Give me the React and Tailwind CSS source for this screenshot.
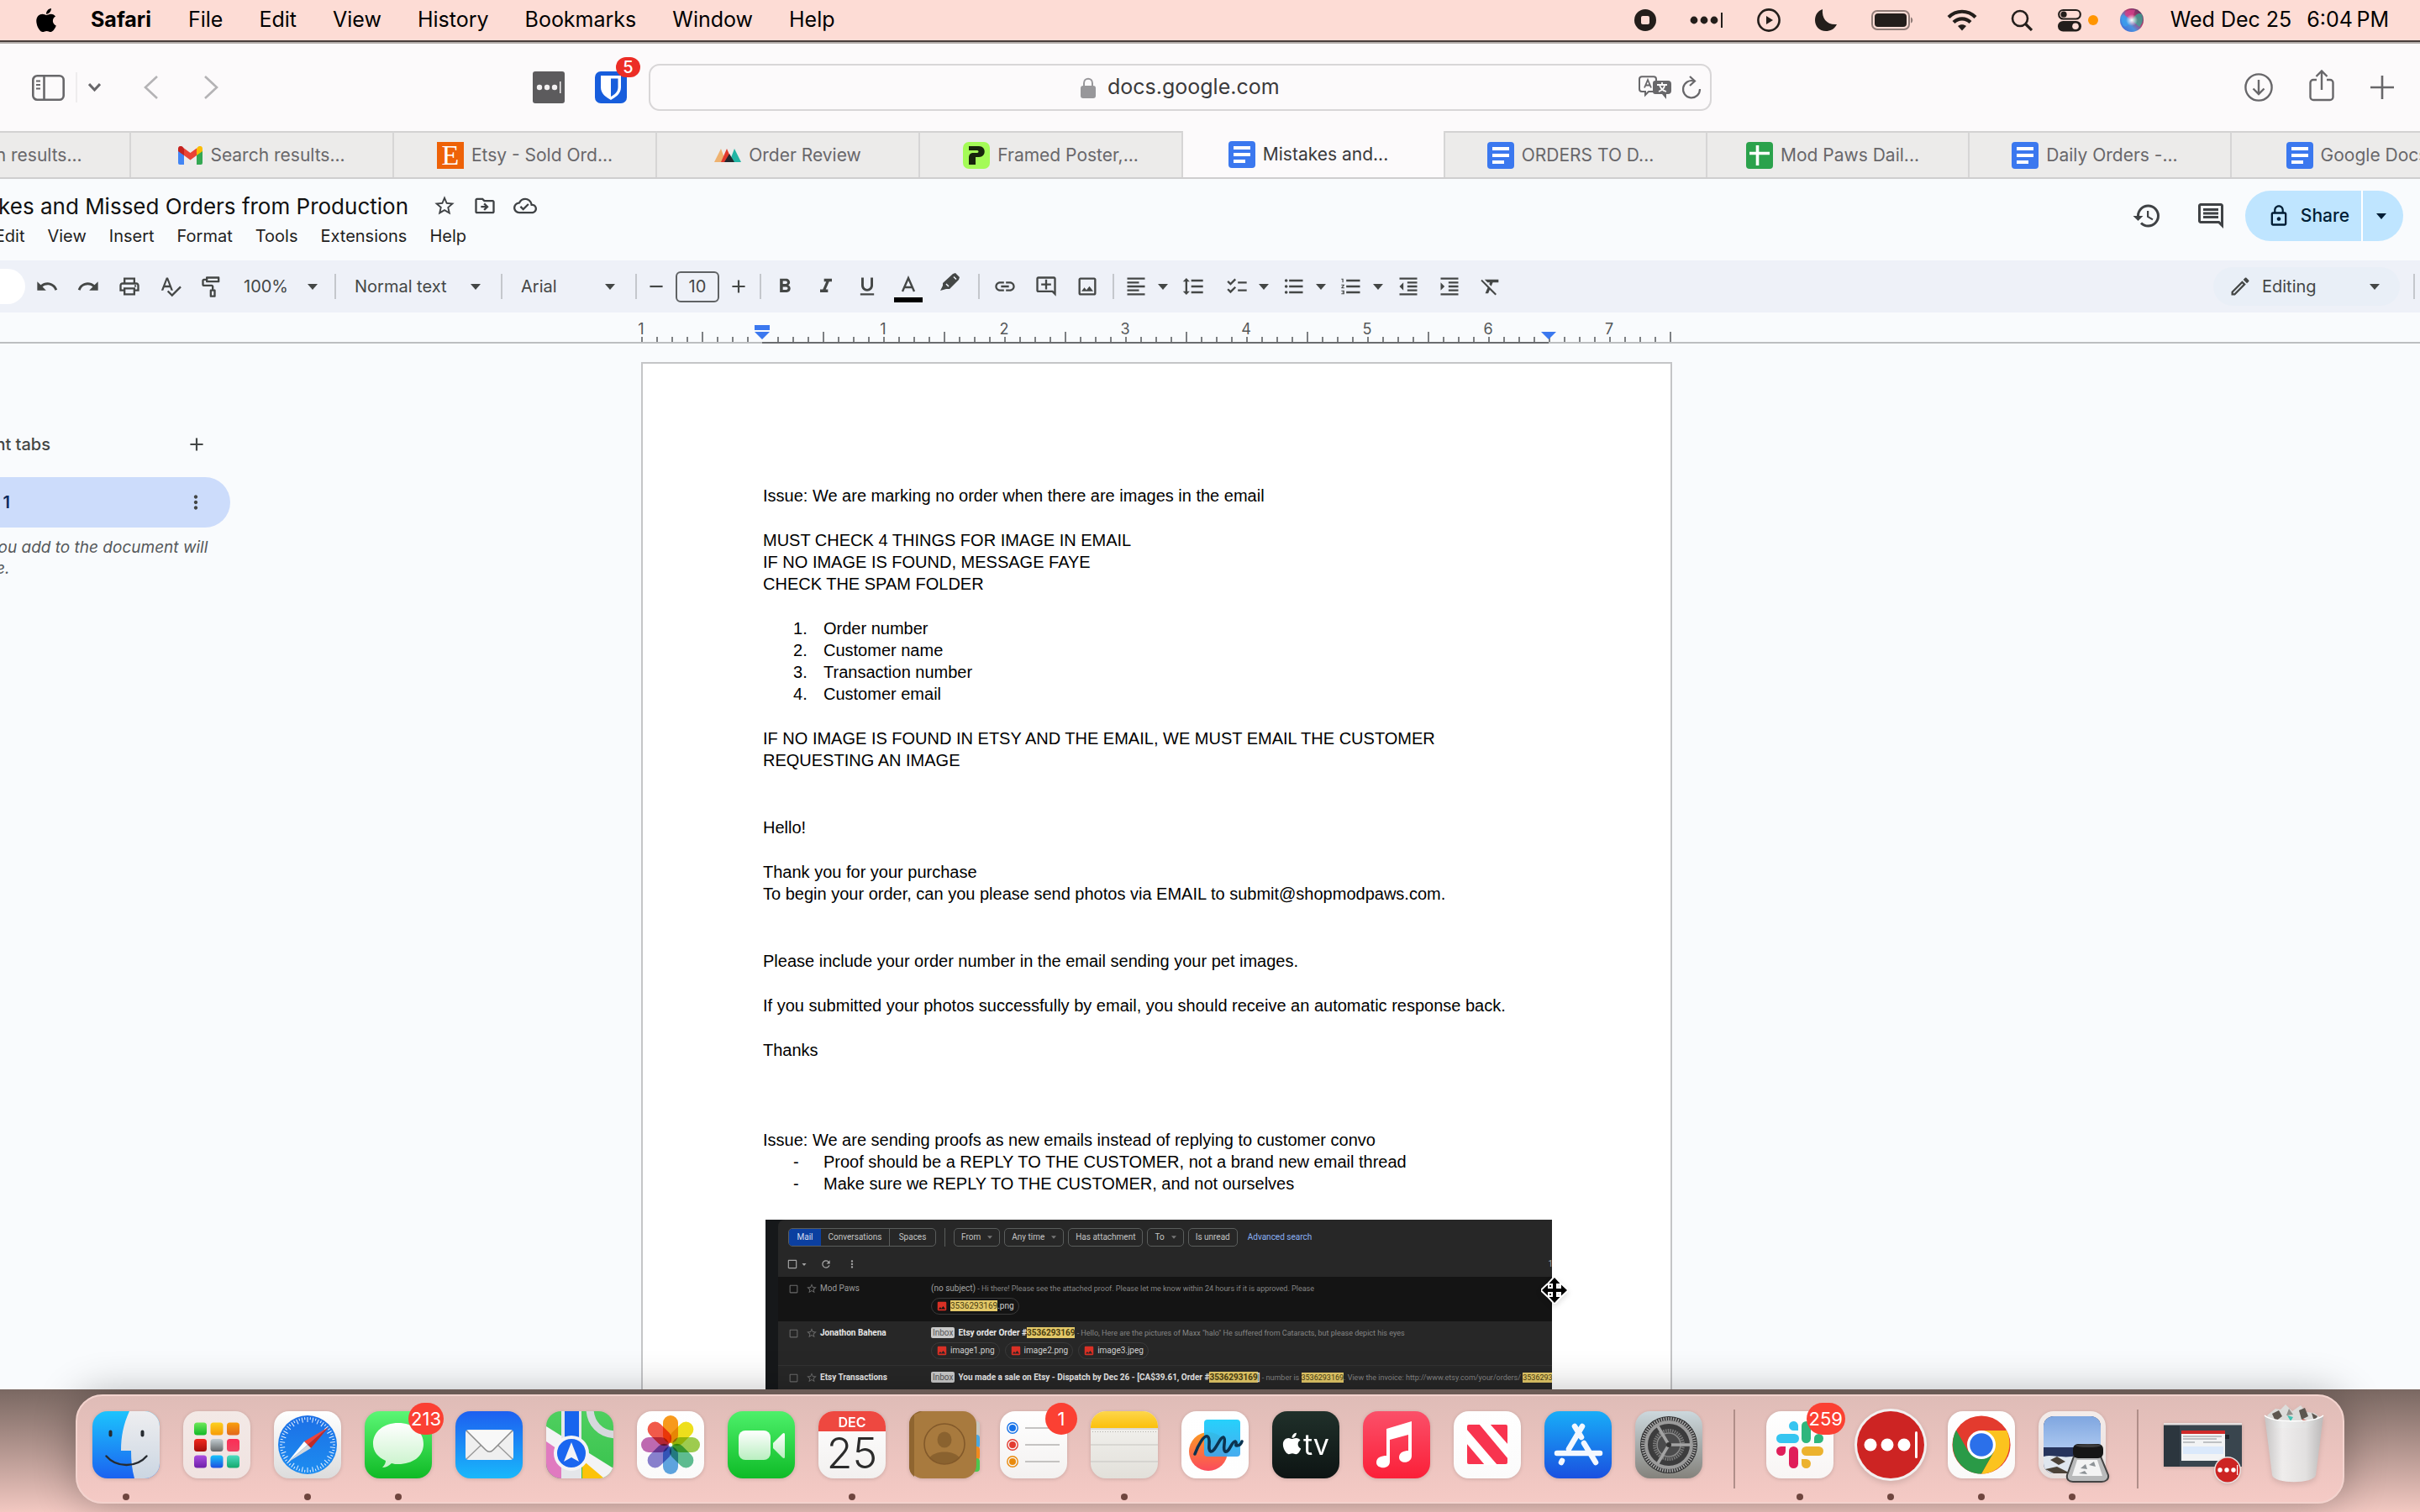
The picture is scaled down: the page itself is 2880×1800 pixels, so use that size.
import {
  MdUndo, MdRedo, MdSpellcheck, MdOutlineLocalPrintshop, MdOutlineImagesearchRoller,
  MdRemove, MdAdd, MdFormatBold, MdFormatItalic, MdFormatUnderlined, MdInsertLink,
  MdOutlineAddComment, MdOutlineImage, MdFormatAlignLeft, MdFormatLineSpacing, MdChecklist,
  MdFormatListBulleted, MdFormatListNumbered, MdFormatIndentDecrease, MdFormatIndentIncrease,
  MdFormatClear, MdHistory, MdOutlineInsertComment, MdLockOutline, MdStarOutline,
  MdOutlineDriveFileMove, MdOutlineCloudDone, MdMoreVert, MdOutlineEdit, MdImage, MdRefresh,
  MdOutlineCheckBoxOutlineBlank,
} from 'react-icons/md'
import { FaApple } from 'react-icons/fa'

function Caret({ className = 'w-3 h-[7px]' }) {
  return <svg viewBox="0 0 12 7" className={className} fill="currentColor"><path d="M0 0h12L6 7z" /></svg>
}

/* ---------- menu bar ---------- */

const macMenus = ['File', 'Edit', 'View', 'History', 'Bookmarks', 'Window', 'Help']

function MenuBar() {
  return (
    <header className="flex h-12 shrink-0 items-center bg-[#fddcd5] pl-[41px] pr-[37px] text-[25px] text-black">
      <FaApple className="mr-[39px] h-8 w-7" />
      <nav className="flex items-center gap-[43px]">
        <button className="mr-px font-bold">Safari</button>
        {macMenus.map(m => <button key={m}>{m}</button>)}
      </nav>
      <div className="ml-auto flex items-center gap-10 text-[#231e1b]">
        <svg viewBox="0 0 26 26" className="size-[26px]">
          <circle cx="13" cy="13" r="13" fill="currentColor" />
          <rect x="8" y="8" width="10" height="10" rx="2" fill="#fddcd5" />
        </svg>
        <svg viewBox="0 0 40 18" className="h-[18px] w-10" fill="currentColor">
          <circle cx="5" cy="9" r="4.4" /><circle cx="17" cy="9" r="4.4" /><circle cx="29" cy="9" r="4.4" />
          <rect x="37" width="2" height="18" />
        </svg>
        <svg viewBox="0 0 28 28" className="size-7" fill="none" stroke="currentColor" strokeWidth="2.6">
          <circle cx="14" cy="14" r="12.6" />
          <path d="M11 9v10l8-5z" fill="currentColor" stroke="none" />
        </svg>
        <svg viewBox="0 0 28 28" className="size-7" fill="currentColor">
          <path d="M10 1C9 12 15 20 27 19 24 25 19 27 14 27 6 27 1 21 1 14 1 8 4 3 10 1z" />
        </svg>
        <svg viewBox="0 0 50 24" className="h-6 w-[50px]">
          <rect x="1" y="1" width="44" height="22" rx="6" fill="none" stroke="currentColor" strokeOpacity=".5" strokeWidth="2" />
          <rect x="4" y="4" width="38" height="16" rx="4" fill="currentColor" />
          <path d="M47 8.500c3 1 3 6 0 7z" fill="currentColor" fillOpacity=".5" />
        </svg>
        <svg viewBox="0 0 36 26" className="h-[26px] w-9" fill="none" stroke="currentColor" strokeWidth="4.200">
          <path d="M2 9.500C11 .5 25 .5 34 9.500M8 15.500c5.500-5.500 14.500-5.500 20 0" />
          <path d="M18 25.500l-5-5.500c3-2.500 7-2.500 10 0z" fill="currentColor" stroke="none" />
        </svg>
        <svg viewBox="0 0 26 26" className="size-[26px]" fill="none" stroke="currentColor" strokeWidth="2.600">
          <circle cx="11" cy="11" r="9" /><path d="M17.500 17.500L25 25" strokeWidth="3.200" />
        </svg>
      </div>
      <div className="ml-[30px] flex items-center gap-2 text-[#231e1b]">
        <svg viewBox="0 0 28 28" className="size-7">
          <rect x="1.200" y="2" width="25.600" height="10.500" rx="5.200" fill="none" stroke="currentColor" strokeWidth="2.200" />
          <circle cx="7" cy="7.200" r="3.600" fill="currentColor" />
          <rect y="15" width="28" height="12.500" rx="6.200" fill="currentColor" />
          <circle cx="21" cy="21.200" r="3.800" fill="#fddcd5" />
        </svg>
        <span className="size-3 rounded-full bg-[#ff9500]" />
        <svg viewBox="0 0 28 28" className="ml-[18px] size-7">
          <defs>
            <linearGradient id="siri" x1="0" y1="1" x2="1" y2="0">
              <stop offset="0" stopColor="#3f58d0" /><stop offset=".35" stopColor="#4a94e0" />
              <stop offset=".6" stopColor="#b43c70" /><stop offset="1" stopColor="#3a2a5a" />
            </linearGradient>
            <radialGradient id="siriGlow"><stop offset="0" stopColor="#fff" /><stop offset="1" stopColor="#fff" stopOpacity="0" /></radialGradient>
          </defs>
          <circle cx="14" cy="14" r="14" fill="url(#siri)" />
          <path d="M14 14C18 8 22 4 26 7c2 6 1 11-3 15z" fill="#2fb59a" opacity=".7" />
          <path d="M14 14C8 12 4 8 7 4c4-3 8-3 11-2z" fill="#d6408c" opacity=".75" />
          <path d="M14 14C10 20 7 23 4 21 1 16 1 11 4 7z" fill="#39a0f0" opacity=".7" />
          <circle cx="14" cy="14" r="7" fill="url(#siriGlow)" />
        </svg>
      </div>
      <span className="ml-8">Wed Dec 25</span>
      <span className="ml-[18px]">6:04&#8201;PM</span>
    </header>
  )
}

/* ---------- Safari toolbar ---------- */

function SafariToolbar() {
  return (
    <div className="flex h-[104px] shrink-0 items-center bg-[#fcfafb] pl-[38px] pr-[31px] text-[#68676a]">
      <button aria-label="Sidebar">
        <svg viewBox="0 0 39 31" className="h-[31px] w-[39px]" fill="none" stroke="currentColor" strokeWidth="2.600">
          <rect x="1.300" y="1.300" width="36.400" height="28.400" rx="5" />
          <path d="M14.500 1.500v28" /><path d="M5 7.500h5M5 12h5M5 16.500h5" strokeWidth="2" />
        </svg>
      </button>
      <span className="ml-[13px] h-9 w-[2px] bg-[#efedee]" />
      <button aria-label="Tab groups" className="ml-[13px]">
        <svg viewBox="0 0 15 10" className="h-[10px] w-[15px]" fill="none" stroke="currentColor" strokeWidth="3"><path d="M1 1l6.500 7L14 1" /></svg>
      </button>
      <button aria-label="Back" className="ml-[51px] text-[#b4b3b5]">
        <svg viewBox="0 0 17 28" className="h-7 w-[17px]" fill="none" stroke="currentColor" strokeWidth="2.600"><path d="M16 1L2 14l14 13" /></svg>
      </button>
      <button aria-label="Forward" className="ml-[55px] text-[#b4b3b5]">
        <svg viewBox="0 0 17 28" className="h-7 w-[17px]" fill="none" stroke="currentColor" strokeWidth="2.600"><path d="M1 1l14 13L1 27" /></svg>
      </button>
      <button aria-label="Text expander" className="ml-[374px]">
        <svg viewBox="0 0 38 38" className="size-[38px]">
          <rect width="38" height="38" rx="3" fill="#5c5b5d" />
          <g fill="#f2f0f1"><circle cx="8" cy="19" r="3.200" /><circle cx="17" cy="19" r="3.200" /><circle cx="26" cy="19" r="3.200" /><rect x="32" y="12" width="1.500" height="14" /></g>
        </svg>
      </button>
      <button aria-label="Passwords" className="relative ml-9">
        <svg viewBox="0 0 38 38" className="size-[38px]">
          <rect width="38" height="38" rx="7" fill="#175ddc" />
          <path d="M7 5h24v14c0 8-7 12-12 15C14 31 7 27 7 19z" fill="#fff" />
          <path d="M19 8.500h8.500V19c0 6-5 9-8.500 11z" fill="#175ddc" />
        </svg>
        <span className="absolute -right-4 -top-[17px] flex h-6 w-[29px] items-center justify-center rounded-full bg-[#ec2d26] text-[20px] font-medium text-white">5</span>
      </button>
      <div className="ml-[26px] flex h-[56px] w-[1265px] items-center rounded-[13px] border-2 border-[#d8d6d7] pl-[512px] pr-[10px]">
        <svg viewBox="0 0 18 25" className="h-[25px] w-[18px] shrink-0">
          <rect y="10" width="18" height="15" rx="3" fill="#98979a" />
          <path d="M4 11V7c0-7 10-7 10 0v4" fill="none" stroke="#98979a" strokeWidth="2" />
        </svg>
        <input aria-label="Address" defaultValue="docs.google.com" className="ml-[14px] w-0 flex-1 bg-transparent text-[25px] text-[#3b3a3c] outline-none" />
        <button aria-label="Translate">
          <svg viewBox="0 0 39 28" className="h-7 w-[39px]">
            <path d="M4 1.200h14a3 3 0 013 3V16a3 3 0 01-3 3h-6l-4 4v-4H4a3 3 0 01-3-3V4a3 3 0 013-2.800z" fill="none" stroke="currentColor" strokeWidth="2" />
            <path d="M7 14.500L11 5l4 9.500M8.500 11.500h5" fill="none" stroke="currentColor" strokeWidth="1.800" />
            <path d="M20 6h15a4 4 0 014 4v8a4 4 0 01-4 4h-2v6l-5-6h-8a3 3 0 01-3-3V9a3 3 0 013-3z" fill="currentColor" />
            <path d="M22 11h12M28 8v3M24 19c5-2 7-5 7-8M25 11c1 4 4 7 8 8" fill="none" stroke="#fcfafb" strokeWidth="1.800" />
          </svg>
        </button>
        <button aria-label="Reload" className="ml-3">
          <svg viewBox="0 0 24 28" className="h-7 w-6" fill="none" stroke="currentColor" strokeWidth="2.200">
            <path d="M15 6.500A10 10.200 0 1022 16" /><path d="M10 1l6 5.500-6 5.500" />
          </svg>
        </button>
      </div>
      <div className="ml-auto flex items-center gap-[43px]">
        <button aria-label="Downloads">
          <svg viewBox="0 0 34 34" className="size-[34px]" fill="none" stroke="currentColor" strokeWidth="2.400">
            <circle cx="17" cy="17" r="15.600" /><path d="M17 8v17M10.500 18.500L17 25l6.500-6.500" />
          </svg>
        </button>
        <button aria-label="Share page">
          <svg viewBox="0 0 30 38" className="mb-1 h-[38px] w-[30px]" fill="none" stroke="currentColor" strokeWidth="2.400">
            <path d="M9 12H5a3.500 3.500 0 00-3.500 3.500v17A3.500 3.500 0 005 36h20a3.500 3.500 0 003.500-3.500v-17A3.500 3.500 0 0025 12h-4M15 24V2M8.500 8L15 1.500 21.500 8" />
          </svg>
        </button>
        <button aria-label="New tab">
          <svg viewBox="0 0 28 28" className="size-7" stroke="currentColor" strokeWidth="2.600"><path d="M14 0v28M0 14h28" /></svg>
        </button>
      </div>
    </div>
  )
}

/* ---------- tab strip ---------- */

function GmailIcon() {
  return (
    <svg viewBox="0 0 29 22" className="h-[22px] w-[29px]">
      <path d="M0 3v17a2 2 0 002 2h5V8z" fill="#4285f4" />
      <path d="M29 3v17a2 2 0 01-2 2h-5V8z" fill="#34a853" />
      <path d="M22 2.500V11l7-5V3c0-3-3-4-5-2.500z" fill="#fbbc04" />
      <path d="M7 11V2.500l7.500 5.500L22 2.500V11l-7.500 5.500z" fill="#ea4335" />
      <path d="M0 3v3l7 5V2.500L5 .5C3-1 0 0 0 3z" fill="#c5221f" />
    </svg>
  )
}
function EtsyIcon() {
  return (
    <svg viewBox="0 0 32 32" className="size-8">
      <rect width="32" height="32" fill="#ee6208" />
      <text x="16" y="27" textAnchor="middle" fontFamily="Liberation Serif, serif" fontSize="34" fill="#fff">E</text>
    </svg>
  )
}
function ReviewIcon() {
  return (
    <svg viewBox="0 0 32 16" className="h-4 w-8">
      <path d="M0 16L8 0l6 16z" fill="#eeb270" /><path d="M18 16L24 0l8 16z" fill="#22b5a4" />
      <path d="M8 16L15 0l7 16z" fill="#e0392c" /><path d="M12 16l6-10 6 10z" fill="#23282d" />
    </svg>
  )
}
function PosterIcon() {
  return (
    <svg viewBox="0 0 32 32" className="size-8">
      <rect width="32" height="32" rx="7" fill="#a4fb57" />
      <path d="M7 5h12c9 0 9 13 0 13h-4v9H7v-8c0-4 2-6 5-6h5c2 0 2-3 0-3H7z" fill="#17240c" />
    </svg>
  )
}
function DocIcon() {
  return (
    <svg viewBox="0 0 32 32" className="size-8">
      <rect width="32" height="32" rx="4" fill="#3b78ef" />
      <path d="M6 8h20M6 16h20M6 24h14" stroke="#fff" strokeWidth="4" />
    </svg>
  )
}
function SheetIcon() {
  return (
    <svg viewBox="0 0 32 32" className="size-8">
      <rect width="32" height="32" rx="4" fill="#2ba24c" />
      <path d="M4 13.500h24M13.500 4v24" stroke="#fff" strokeWidth="3.600" />
    </svg>
  )
}

const tabs = [
  { title: 'Search results...', Icon: GmailIcon },
  { title: 'Search results...', Icon: GmailIcon },
  { title: 'Etsy - Sold Ord...', Icon: EtsyIcon },
  { title: 'Order Review', Icon: ReviewIcon },
  { title: 'Framed Poster,...', Icon: PosterIcon },
  { title: 'Mistakes and...', Icon: DocIcon, active: true },
  { title: 'ORDERS TO D...', Icon: DocIcon },
  { title: 'Mod Paws Dail...', Icon: SheetIcon },
  { title: 'Daily Orders -...', Icon: DocIcon },
  { title: 'Google Docs', Icon: DocIcon },
]

function TabStrip() {
  return (
    <div className="flex h-[57px] shrink-0 overflow-hidden border-b-2 border-[#cfcecf] bg-[#ecebea]">
      <div className="-ml-[157px] flex">
        {tabs.map(({ title, Icon, active }, i) => (
          <button
            key={i}
            className={`flex shrink-0 items-center justify-center gap-[9px] border-r-2 border-[#d6d5d5] text-[21px] ${i < 5 ? 'w-[313px]' : 'w-[312px] pr-3'} ${active ? 'bg-[#fcfafb] text-[#3b3a3c]' : 'border-t-2 border-t-[#d3d2d2] text-[#68676a]'}`}
          >
            <Icon />
            {title}
          </button>
        ))}
      </div>
    </div>
  )
}

/* ---------- Docs chrome ---------- */

function DocsHeader() {
  return (
    <div className="flex h-[97px] shrink-0 items-start justify-between bg-[#f9fbfd] pr-5 text-[#3f4245]">
      <div>
        <div className="mt-[11px] flex h-[42px] items-center">
          <h1 className="flex w-[486px] justify-end overflow-hidden whitespace-nowrap text-[26px] text-[#111]">Mistakes and Missed Orders from Production</h1>
          <button aria-label="Star" className="ml-[29px]"><MdStarOutline size={28} /></button>
          <button aria-label="Move" className="ml-5"><MdOutlineDriveFileMove size={28} /></button>
          <button aria-label="Saved to Drive" className="ml-5"><MdOutlineCloudDone size={28} /></button>
        </div>
        <nav className="flex w-[555px] justify-end gap-[27px] overflow-hidden whitespace-nowrap text-[20px] leading-[30px] text-[#1f1f1f]">
          {['File', 'Edit', 'View', 'Insert', 'Format', 'Tools', 'Extensions', 'Help'].map(m => <button key={m}>{m}</button>)}
        </nav>
      </div>
      <div className="mt-[14px] flex items-center">
        <button aria-label="Version history"><MdHistory size={36} /></button>
        <button aria-label="Comments" className="ml-10"><MdOutlineInsertComment size={36} /></button>
        <div className="ml-[23px] flex h-[60px] items-center overflow-hidden rounded-full bg-[#bfe5ff] text-[#001d35]">
          <button className="flex h-full w-[138px] items-center justify-end gap-3 pr-[14px] text-[21px] font-medium"><MdLockOutline size={28} />Share</button>
          <span className="h-full w-[2px] bg-white" />
          <button aria-label="Share options" className="flex h-full w-12 items-center justify-center pr-1"><Caret /></button>
        </div>
      </div>
    </div>
  )
}

function Divider({ className }) {
  return <span className={`h-[30px] w-[2px] shrink-0 bg-[#c4c7cc] ${className}`} />
}

function Picker({ label, value, className }) {
  return (
    <label className="flex items-center">
      <select aria-label={label} className={`appearance-none bg-transparent text-[20px] outline-none ${className}`} defaultValue={value}>
        <option>{value}</option>
      </select>
      <Caret />
    </label>
  )
}

function Tool({ icon: Icon, label, caret, className = '' }) {
  return (
    <button aria-label={label} className={`flex shrink-0 items-center ${className}`}>
      <Icon size={28} />
      {caret && <Caret className="ml-3 h-[7px] w-3" />}
    </button>
  )
}

function TextColor() {
  return (
    <svg viewBox="0 0 34 32" className="h-8 w-[34px]">
      <path d="M10 19l7-16 7 16M12.500 14h9" fill="none" stroke="currentColor" strokeWidth="2.400" />
      <rect y="26" width="34" height="6" fill="#000" />
    </svg>
  )
}

function Highlighter() {
  return (
    <svg viewBox="0 0 28 28" className="mb-2 size-7">
      <path d="M3 23l3-6v-3L18 3l3-1 5 5-1 3-11 11h-4z" fill="currentColor" />
      <path d="M10 15l3 3M19 6.500l3 3" stroke="#eef1f8" strokeWidth="1.600" />
    </svg>
  )
}

function DocsToolbar() {
  return (
    <div className="flex h-[62px] shrink-0 items-center bg-[#eef1f8] text-[#444746]">
      <span className="h-[42px] w-[30px] rounded-r-full bg-white" />
      <div className="ml-3 flex items-center gap-[21px]">
        <Tool icon={MdUndo} label="Undo" />
        <Tool icon={MdRedo} label="Redo" />
        <Tool icon={MdOutlineLocalPrintshop} label="Print" />
        <Tool icon={MdSpellcheck} label="Spelling" />
        <Tool icon={MdOutlineImagesearchRoller} label="Paint format" />
      </div>
      <div className="ml-6 flex items-center"><Picker label="Zoom" value="100%" className="w-[76px]" /></div>
      <Divider className="ml-5" />
      <div className="ml-[22px] flex items-center"><Picker label="Style" value="Normal text" className="w-[138px]" /></div>
      <Divider className="ml-6" />
      <div className="ml-[22px] flex items-center"><Picker label="Font" value="Arial" className="w-[100px]" /></div>
      <Divider className="ml-6" />
      <div className="ml-[10px] flex items-center gap-[10px]">
        <button aria-label="Smaller"><MdRemove size={26} /></button>
        <input aria-label="Font size" defaultValue="10" className="h-[37px] w-[52px] rounded-[6px] border-2 border-[#5f6264] bg-transparent text-center text-[20px]" />
        <button aria-label="Larger"><MdAdd size={26} /></button>
      </div>
      <Divider className="ml-3" />
      <div className="ml-[14px] flex items-center gap-[21px]">
        <Tool icon={MdFormatBold} label="Bold" />
        <Tool icon={MdFormatItalic} label="Italic" />
        <Tool icon={MdFormatUnderlined} label="Underline" />
        <button aria-label="Text color" className="-mx-[3px] mt-[6px]"><TextColor /></button>
        <button aria-label="Highlight color"><Highlighter /></button>
      </div>
      <Divider className="ml-5" />
      <div className="ml-4 flex items-center gap-[21px]">
        <Tool icon={MdInsertLink} label="Link" />
        <Tool icon={MdOutlineAddComment} label="Add comment" />
        <Tool icon={MdOutlineImage} label="Image" />
      </div>
      <Divider className="ml-4" />
      <Tool icon={MdFormatAlignLeft} label="Align" caret className="ml-3" />
      <Tool icon={MdFormatLineSpacing} label="Line spacing" className="ml-4" />
      <div className="ml-6 flex items-center gap-4">
        <Tool icon={MdChecklist} label="Checklist" caret />
        <Tool icon={MdFormatListBulleted} label="Bulleted list" caret />
        <Tool icon={MdFormatListNumbered} label="Numbered list" caret />
      </div>
      <div className="ml-4 flex items-center gap-[21px]">
        <Tool icon={MdFormatIndentDecrease} label="Decrease indent" />
        <Tool icon={MdFormatIndentIncrease} label="Increase indent" />
        <Tool icon={MdFormatClear} label="Clear formatting" />
      </div>
      <label className="ml-auto flex h-[46px] items-center rounded-full bg-[#e9eff7] pl-[18px] pr-6">
        <MdOutlineEdit size={28} />
        <select aria-label="Mode" className="ml-3 w-[128px] appearance-none bg-transparent text-[20px]" defaultValue="Editing"><option>Editing</option></select>
        <Caret />
      </label>
      <Divider className="ml-4 mr-[6px]" />
    </div>
  )
}

const ticks = Array.from({ length: 69 }, (_, i) => i)

function Ruler() {
  return (
    <div className="flex h-[37px] shrink-0 items-end border-b-2 border-[#bdbfc1] bg-[#f9fbfd] pl-[763px]">
      <div className="relative flex h-full w-[1227px] items-end justify-between">
        {ticks.map(i => (
          <span key={i} className={`relative w-[2px] bg-[#7d8083] ${i % 8 === 4 ? 'h-3' : i === 8 ? 'h-0' : 'h-[6px]'}`}>
            {i % 8 === 0 && i !== 8 && (
              <span className="absolute -left-[10px] bottom-1 w-5 text-center text-[18px] leading-[22px] text-[#55585a]">{i === 0 ? 1 : i / 8 - 1}</span>
            )}
          </span>
        ))}
        <span className="absolute -bottom-[2px] left-[144px] h-[2px] w-[936px] bg-[#6b6d70]" />
        <svg viewBox="0 0 18 17" className="absolute bottom-[3px] left-[135px] h-[17px] w-[18px]" fill="#3b78ef"><path d="M0 0h18v6H0zM0 8h18l-9 9z" /></svg>
        <svg viewBox="0 0 18 9" className="absolute bottom-[3px] left-[1071px] h-[9px] w-[18px]" fill="#3b78ef"><path d="M0 0h18L9 9z" /></svg>
      </div>
    </div>
  )
}

function TabsPanel() {
  return (
    <aside className="w-[763px] shrink-0 pt-[100px] text-[#444746]">
      <div className="flex h-10 items-center">
        <h2 className="flex w-[60px] justify-end overflow-hidden whitespace-nowrap text-[20px] font-medium">Document tabs</h2>
        <button aria-label="Add tab" className="ml-[161px]"><MdAdd size={26} /></button>
      </div>
      <div className="mt-[19px] flex h-[60px] w-[274px] items-center rounded-r-full bg-[#ccdcfb]">
        <button className="flex w-3 justify-end overflow-hidden whitespace-nowrap text-[20px] font-semibold text-[#0b2a5b]">Tab 1</button>
        <button aria-label="Tab options" className="ml-[208px]"><MdMoreVert size={26} /></button>
      </div>
      <p className="-ml-[104px] mt-[11px] whitespace-nowrap text-[19px] italic leading-[25px] text-[#55585a]">
        Headings you add to the document will<br />appear here.
      </p>
    </aside>
  )
}

/* ---------- embedded mail screenshot ---------- */

function Hit({ children }) {
  return <span className="bg-[#e3c868] py-px text-[#4a3d10]">{children}</span>
}

function Chip({ children }) {
  return (
    <span className="flex h-5 items-center gap-[3px] rounded-full border border-[#3a3a3a] px-[5px] text-[#d0d0d0]">
      <MdImage className="text-[#d93025]" size={14} />
      <span>{children}</span>
    </span>
  )
}

function MailRow({ from, bold, children, chips, className = '' }) {
  return (
    <div className={`flex h-[53px] pl-3 ${className}`}>
      <div className="flex h-7 w-[38px] shrink-0 items-center gap-2 text-[#6a6a6a]">
        <MdOutlineCheckBoxOutlineBlank size={13} />
        <MdStarOutline size={14} />
      </div>
      <span className={`w-[132px] shrink-0 leading-7 ${bold ? 'font-bold text-[#e8e8e8]' : 'text-[#9a9a9a]'}`}>{from}</span>
      <div>
        <p className="h-7 text-[9px] leading-7 text-[#858585]">{children}</p>
        <div className="-mt-[3px] flex gap-[6px]">{chips}</div>
      </div>
    </div>
  )
}

function MailShot() {
  const filter = 'flex h-[22px] items-center gap-2 rounded-[5px] border border-[#5a5d5c] px-2'
  const inbox = <span className="mr-1 rounded-[2px] bg-[#c9c9c9] px-[2px] py-px text-[10px] text-[#555]">Inbox</span>
  const subject = 'text-[10px] text-[#e8e8e8]'
  return (
    <div className="ml-[3px] mt-[30px] h-[400px] w-[936px] overflow-hidden bg-[#16181a] pl-[15px] font-[Roboto,sans-serif] text-[10px]">
      <div className="h-full overflow-hidden whitespace-nowrap rounded-tl-[8px] bg-[#272727] text-[#c4c4c4]">
        <div className="flex h-[42px] items-center pl-3">
          <div className="flex h-[22px] items-center overflow-hidden rounded-[5px] border border-[#5a5d5c]">
            <span className="flex h-full w-[38px] items-center justify-center bg-[#0b3fa0] text-[#d5def0]">Mail</span>
            <span className="flex h-full w-[82px] items-center justify-center border-r border-[#5a5d5c]">Conversations</span>
            <span className="flex h-full w-[54px] items-center justify-center">Spaces</span>
          </div>
          <span className="ml-[10px] h-[22px] w-px bg-[#5a5d5c]" />
          <div className="ml-[10px] flex items-center gap-[5px]">
            <span className={filter}>From <Caret className="h-1 w-[6px] text-[#777]" /></span>
            <span className={filter}>Any time <Caret className="h-1 w-[6px] text-[#777]" /></span>
            <span className={filter}>Has attachment</span>
            <span className={filter}>To <Caret className="h-1 w-[6px] text-[#777]" /></span>
            <span className={filter}>Is unread</span>
          </div>
          <span className="ml-3 text-[#8ab0f5]">Advanced search</span>
        </div>
        <div className="flex h-[26px] items-center pb-1 pl-[10px] text-[#a5a5a5]">
          <MdOutlineCheckBoxOutlineBlank size={14} />
          <Caret className="ml-1 h-[3px] w-[6px]" />
          <MdRefresh size={14} className="ml-4" />
          <MdMoreVert size={14} className="ml-[17px]" />
          <span className="-mr-[19px] ml-auto">1–50</span>
        </div>
        <MailRow from="Mod Paws" className="bg-[#141414]" chips={<Chip><Hit>3536293169</Hit>.png</Chip>}>
          <span className="text-[10px] text-[#a0a0a0]">(no subject)</span> - Hi there! Please see the attached proof. Please let me know within 24 hours if it is approved. Please
        </MailRow>
        <MailRow from="Jonathon Bahena" bold className="border-b border-[#333]" chips={<><Chip>image1.png</Chip><Chip>image2.png</Chip><Chip>image3.jpeg</Chip></>}>
          {inbox}<b className={subject}>Etsy order Order #<Hit>3536293169</Hit></b> - Hello, Here are the pictures of Maxx "halo" He suffered from Cataracts, but please depict his eyes
        </MailRow>
        <MailRow from="Etsy Transactions" bold>
          {inbox}<b className={subject}>You made a sale on Etsy - Dispatch by Dec 26 - [CA$39.61, Order #<Hit>3536293169</Hit>]</b> - number is <Hit>3536293169</Hit>. View the invoice: http://www.etsy.com/your/orders/ <Hit>3536293169</Hit>
        </MailRow>
      </div>
    </div>
  )
}

function Page() {
  return (
    <article className="relative w-[1227px] shrink-0 border-2 border-b-0 border-[#c4c5c7] bg-white pl-[143px] pt-[144px] font-['Liberation_Sans',Arial,sans-serif] text-[20px] leading-[26px] text-black">
      <p>Issue: We are marking no order when there are images in the email</p>
      <p className="mt-[27px]">MUST CHECK 4 THINGS FOR IMAGE IN EMAIL</p>
      <p>IF NO IMAGE IS FOUND, MESSAGE FAYE</p>
      <p>CHECK THE SPAM FOLDER</p>
      <ol className="mt-[27px] pl-9">
        {['Order number', 'Customer name', 'Transaction number', 'Customer email'].map((item, i) => (
          <li key={item} className="flex"><span className="w-9">{i + 1}.</span>{item}</li>
        ))}
      </ol>
      <p className="mt-[27px]">IF NO IMAGE IS FOUND IN ETSY AND THE EMAIL, WE MUST EMAIL THE CUSTOMER<br />REQUESTING AN IMAGE</p>
      <p className="mt-[54px]">Hello!</p>
      <p className="mt-[27px]">Thank you for your purchase</p>
      <p>To begin your order, can you please send photos via EMAIL to submit@shopmodpaws.com.</p>
      <p className="mt-[54px]">Please include your order number in the email sending your pet images.</p>
      <p className="mt-[27px]">If you submitted your photos successfully by email, you should receive an automatic response back.</p>
      <p className="mt-[27px]">Thanks</p>
      <p className="mt-[81px]">Issue: We are sending proofs as new emails instead of replying to customer convo</p>
      <ul className="pl-9">
        <li className="flex"><span className="w-9">-</span>Proof should be a REPLY TO THE CUSTOMER, not a brand new email thread</li>
        <li className="flex"><span className="w-9">-</span>Make sure we REPLY TO THE CUSTOMER, and not ourselves</li>
      </ul>
      <MailShot />
      {/* move cursor over the image edge */}
      <svg viewBox="0 0 32 32" className="absolute left-[1069px] top-[1087px] size-8 drop-shadow-md">
        <path d="M16 1l6.500 7H18v6h6V9.500L31 16l-7 6.500V18h-6v6h4.500L16 31l-6.500-7H14v-6H8v4.500L1 16l7-6.500V14h6V8H9.500z" fill="#000" stroke="#fff" strokeWidth="4" strokeLinejoin="round" paintOrder="stroke" />
      </svg>
    </article>
  )
}

/* ---------- dock ---------- */

function Grad({ id, from, to }) {
  return (
    <linearGradient id={id} x1="0" y1="0" x2="0" y2="1">
      <stop offset="0" stopColor={from} /><stop offset="1" stopColor={to} />
    </linearGradient>
  )
}

function Tile({ id, from, to, children }) {
  return (
    <svg viewBox="0 0 80 80" className="size-20 overflow-visible drop-shadow-sm">
      <defs>
        <Grad id={id} from={from} to={to} />
        <clipPath id={`${id}-clip`}><rect width="80" height="80" rx="18" /></clipPath>
      </defs>
      <rect width="80" height="80" rx="18" fill={`url(#${id})`} />
      {children}
    </svg>
  )
}

function Finder() {
  return (
    <Tile id="finder" from="#1cc4fd" to="#1b62f0">
      <defs><Grad id="finderFace" from="#eeeef0" to="#cbd6e2" /></defs>
      <path d="M44 0C37 15 34 30 34 47h12c0 12 1 22 4 33h30V0z" fill="url(#finderFace)" clipPath="url(#finder-clip)" />
      <g stroke="#262b30" strokeLinecap="round" fill="none">
        <path d="M21.500 24.500v4M59.500 24.500v4" strokeWidth="4" />
        <path d="M16.500 53.500c12 14 36 14 48 0" strokeWidth="2.400" />
      </g>
    </Tile>
  )
}

const launchColors = [
  ['#6fe85a', '#12b827'], ['#fcd01f', '#f79a06'], ['#f99f0b', '#e2661c'],
  ['#f2281f', '#a50d0a'], ['#c3cdd1', '#646769'], ['#fb2d55', '#f04362'],
  ['#a94de0', '#6f1fa8'], ['#17c3fb', '#1d4fe0'], ['#4ddcc0', '#14a86c'],
]

function Launchpad() {
  return (
    <Tile id="launch" from="#f3e9e6" to="#f0e3e1">
      {launchColors.map(([a, b], i) => (
        <g key={i}>
          <defs><Grad id={`lp${i}`} from={a} to={b} /></defs>
          <rect x={13 + (i % 3) * 19.500} y={13.500 + Math.floor(i / 3) * 19.500} width="15" height="15" rx="3.500" fill={`url(#lp${i})`} />
        </g>
      ))}
    </Tile>
  )
}

function Safari() {
  return (
    <Tile id="safari" from="#ffffff" to="#dcdcdc">
      <defs><Grad id="safariDial" from="#1c6fe6" to="#1d8df0" /></defs>
      <circle cx="40" cy="40" r="35" fill="url(#safariDial)" />
      {Array.from({ length: 60 }, (_, i) => (
        <path key={i} d={i % 2 ? 'M40 7v3' : 'M40 7v6'} stroke="#e8f2ff" strokeWidth="1" transform={`rotate(${i * 6} 40 40)`} />
      ))}
      <path d="M65 19L36 36l4 4z" fill="#f0433a" /><path d="M65 19L44 44l-4-4z" fill="#c22a24" />
      <path d="M16 61l20-25 4 4z" fill="#fff" /><path d="M16 61l28-17-4-4z" fill="#d3d8de" />
    </Tile>
  )
}

function Messages() {
  return (
    <Tile id="messages" from="#5bf675" to="#0fba25">
      <defs><Grad id="bubble" from="#ffffff" to="#c9f3cb" /></defs>
      <path d="M40 14c17 0 30 10 30 25S57 63 40 63c-3 0-5 0-8-1-3 3-7 5-11 5 3-3 4-6 4-8C16 55 10 48 10 39c0-15 13-25 30-25z" fill="url(#bubble)" />
    </Tile>
  )
}

function Mail() {
  return (
    <Tile id="mail" from="#1d5ff0" to="#19b8fb">
      <rect x="12" y="22" width="57" height="36" rx="4" fill="#efefef" />
      <path d="M13 57l20-19M68 57L48 38" stroke="#9a9a9a" strokeWidth="1.400" />
      <path d="M13 23l23 23c3 3 6 3 9 0l23-23" fill="#f8f8f8" stroke="#8c8c8c" strokeWidth="1.600" />
    </Tile>
  )
}

function Maps() {
  return (
    <Tile id="maps" from="#4fcf5f" to="#38c24d">
      <g clipPath="url(#maps-clip)">
        <path d="M0 30l18 12v38H0z" fill="#e07ac0" />
        <path d="M0 18l80 50v22L0 36z" fill="#f3f3f5" />
        <path d="M18 0h24v80H18z" fill="#e4e6ea" />
        <path d="M22 0h17v45H22z" fill="#1764ee" />
        <path d="M43 80V58l26 22z" fill="#fcc30a" />
        <path d="M52-4c0 18 12 32 32 32" fill="none" stroke="#d6d8dc" strokeWidth="9" />
      </g>
      <circle cx="30" cy="50" r="19" fill="#1a66f0" stroke="#f4f4f6" strokeWidth="4" />
      <path d="M30 37l9 23-9-5-9 5z" fill="#f4f4f6" />
    </Tile>
  )
}

const petals = ['#f89a1c', '#efe01c', '#9fce4f', '#5fbe92', '#5fa6e2', '#8a82d0', '#c06ab2', '#f25a4a']

function Photos() {
  return (
    <Tile id="photos" from="#ffffff" to="#fafafa">
      {petals.map((c, i) => (
        <rect key={c} x="31" y="5" width="18" height="33" rx="9" fill={c} className="mix-blend-multiply" transform={`rotate(${i * 45} 40 40)`} />
      ))}
    </Tile>
  )
}

function FaceTime() {
  return (
    <Tile id="facetime" from="#4df06a" to="#0ebb27">
      <defs><Grad id="cam" from="#ffffff" to="#b9eec0" /></defs>
      <rect x="13" y="23" width="38" height="35" rx="8" fill="url(#cam)" />
      <path d="M54 38l11-11c2-2 3-1 3 1v26c0 2-1 3-3 1L54 44z" fill="url(#cam)" />
    </Tile>
  )
}

function Calendar() {
  return (
    <Tile id="calendar" from="#ffffff" to="#f2f0ef">
      <path d="M0 24V18A18 18 0 0118 0h44a18 18 0 0118 18v6z" fill="#ee4840" />
      <text x="40" y="19" textAnchor="middle" fontSize="16" fontWeight="600" fill="#fff">DEC</text>
      <text x="40" y="68" textAnchor="middle" fontFamily="Inter, sans-serif" fontWeight="300" fontSize="50" fill="#2b2b2b">25</text>
    </Tile>
  )
}

function Contacts() {
  return (
    <svg viewBox="0 0 80 80" className="size-20 overflow-visible drop-shadow-sm">
      <rect x="66" y="12" width="18" height="20" rx="4" fill="#c9c7c0" /><rect x="66" y="28" width="18" height="16" rx="4" fill="#4aa8e0" />
      <rect x="66" y="42" width="18" height="16" rx="4" fill="#f28a1c" /><rect x="66" y="56" width="18" height="16" rx="4" fill="#4cc84e" />
      <rect width="80" height="80" rx="16" fill="#a87a3e" />
      <path d="M16 0h-2A16 16 0 000 16v48a16 16 0 006 14V4z" fill="#8f6530" />
      <g fill="#8a622f"><ellipse cx="42" cy="34" rx="8.500" ry="9.500" /><path d="M24 56c5-10 31-10 36 0-8 9-28 9-36 0z" /></g>
      <circle cx="42" cy="39" r="24" fill="none" stroke="#82592a" strokeWidth="1.600" />
    </svg>
  )
}

function Reminders() {
  return (
    <Tile id="reminders" from="#ffffff" to="#f3f1f0">
      {['#1672e8', '#e33b30', '#e98a0c'].map((c, i) => (
        <g key={c}>
          <circle cx="15" cy={20 + i * 20} r="6.200" fill="none" stroke={c} strokeWidth="1.400" />
          <circle cx="15" cy={20 + i * 20} r="4" fill={c} />
          <path d={`M30 ${20 + i * 20}h41`} stroke="#b3b2b1" strokeWidth="1.400" />
        </g>
      ))}
    </Tile>
  )
}

function Notes() {
  return (
    <Tile id="notes" from="#f5f4f1" to="#e2e0da">
      <defs><Grad id="notesTop" from="#fdd64b" to="#fbc00c" /></defs>
      <path d="M0 20v-2A18 18 0 0118 0h44a18 18 0 0118 18v2z" fill="url(#notesTop)" />
      <path d="M0 21h80M0 40h80M0 60h80" stroke="#c5c3bf" strokeWidth="1.200" />
      <path d="M2 24.500h76" stroke="#b5b3ae" strokeWidth="1" strokeDasharray="1 2" />
    </Tile>
  )
}

function Freeform() {
  return (
    <Tile id="freeform" from="#ffffff" to="#fefefe">
      <defs><Grad id="ffBall" from="#fb9a24" to="#fb4b5c" /><Grad id="ffSheet" from="#16cdfb" to="#3aa6ee" /></defs>
      <circle cx="32" cy="48" r="23" fill="url(#ffBall)" />
      <rect x="27" y="10" width="43" height="44" rx="4" fill="url(#ffSheet)" opacity=".93" />
      <path d="M16 51C20 40 27 28 31 30 36 33 30 46 35 48 40 49 46 30 50 31 54 33 48 45 52 48 57 50 60 35 64 36 67 38 63 41 66 41 69 41 71 39 72 36" fill="none" stroke="#0b3350" strokeWidth="3.600" strokeLinecap="round" />
    </Tile>
  )
}

function AppleTV() {
  return (
    <Tile id="tv" from="#20302a" to="#0d1413">
      <FaApple x="9" y="24" size={29} color="#fff" />
      <text x="37" y="52" fontSize="34" fill="#fff">tv</text>
    </Tile>
  )
}

function Music() {
  return (
    <Tile id="music" from="#fb5069" to="#fb1f38">
      <path d="M28 21l30-9v41c0 10-15 10-15 2 0-6 6-8 11-8V28l-22 6v26c0 10-16 9-16 1 0-6 6-8 12-8z" fill="#fff" />
    </Tile>
  )
}

function News() {
  return (
    <Tile id="news" from="#ffffff" to="#fbfbfb">
      <rect x="16" y="16" width="48" height="47" rx="2" fill="#f8344f" />
      <path d="M30 15l35 42V40L43 15zM15 21v17l22 26h15z" fill="#fff" />
    </Tile>
  )
}

function AppStore() {
  return (
    <Tile id="store" from="#18adf8" to="#1a50e0">
      <g stroke="#f3f8ff" strokeWidth="6.500" strokeLinecap="round">
        <path d="M45 18L29 45M36 18l8 13M47 38l14 23M15 50h51M21 59l-1 2" />
      </g>
    </Tile>
  )
}

function Settings() {
  return (
    <Tile id="settings" from="#ccd8dd" to="#84827c">
      <circle cx="40" cy="40" r="34" fill="#2e2e2f" />
      <circle cx="40" cy="40" r="31" fill="none" stroke="#a9a9a9" strokeWidth="4" strokeDasharray="1.500 1.400" />
      <circle cx="40" cy="40" r="27" fill="#3c3c3d" stroke="#9b9b9b" strokeWidth="4" />
      <circle cx="40" cy="40" r="17" fill="none" stroke="#7b7b7b" strokeWidth="4" strokeDasharray="1.500 1.200" />
      <circle cx="40" cy="40" r="14" fill="#4b4b4c" stroke="#8a8a8a" strokeWidth="1.500" />
      <path d="M40 40h26M40 40L27 18M40 40L27 62" stroke="#a3a3a3" strokeWidth="3.500" />
      <circle cx="40" cy="40" r="3" fill="#333" />
    </Tile>
  )
}

function Slack() {
  return (
    <Tile id="slack" from="#ffffff" to="#f8f5f4">
      <g fill="#36c5f0"><rect x="12" y="27" width="27" height="11" rx="5.500" /><path d="M38 23V17a5.500 5.500 0 10-5.500 6z" /></g>
      <g fill="#2eb67d"><rect x="42" y="12" width="11" height="26" rx="5.500" /><path d="M57 38h5.500a5.500 5.500 0 10-5.500-5.500z" /></g>
      <g fill="#ecb22e"><rect x="42" y="42" width="26" height="11" rx="5.500" /><path d="M42 57v5.500a5.500 5.500 0 105.500-5.500z" /></g>
      <g fill="#e01e5a"><rect x="27" y="42" width="11" height="26" rx="5.500" /><path d="M23 42h-5.500a5.500 5.500 0 105.500 5.500z" /></g>
    </Tile>
  )
}

function TextBlaze() {
  return (
    <svg viewBox="0 0 80 80" className="size-20 overflow-visible drop-shadow-md">
      <circle cx="40" cy="40" r="43" fill="#f2f0f0" /><circle cx="40" cy="40" r="40" fill="#cd2423" />
      <g fill="#fff"><circle cx="16" cy="40" r="7.500" /><circle cx="36" cy="40" r="7.500" /><circle cx="56" cy="40" r="7.500" /><rect x="69" y="24" width="3" height="32" rx="1.500" /></g>
    </svg>
  )
}

function Chrome() {
  return (
    <Tile id="chrome" from="#ffffff" to="#faf9f8">
      <circle cx="40" cy="40" r="34.600" fill="#e33b2e" />
      <path d="M40 23h30.200c10 22-4 51.600-30.200 51.600L55 48z" fill="#fcc31e" />
      <path d="M24.500 48L10 22.500C-2 46 14 74.600 40 74.600L55 48z" fill="#2a9a47" />
      <circle cx="40" cy="40" r="17" fill="#fff" /><circle cx="40" cy="40" r="13.800" fill="#2b70ea" />
    </Tile>
  )
}

function Preview() {
  return (
    <Tile id="preview" from="#f4ecea" to="#e6dedd">
      <defs><Grad id="sky" from="#7fa6e0" to="#a9c6ef" /></defs>
      <rect x="6" y="6" width="68" height="68" rx="12" fill="#26345c" />
      <path d="M6 43V18A12 12 0 0118 6h44a12 12 0 0112 12v25z" fill="url(#sky)" />
      <path d="M6 54c10-3 22 3 40-1v21H18A12 12 0 016 62z" fill="#dfe6ee" />
      <path d="M14 58l8-4 10 6-8 4zM8 69l14-3 16 8H18z" fill="#4b4238" />
      <path d="M42 54h32l9 22c1 5-3 8-8 8H41c-5 0-8-3-7-8z" fill="#b9babb" stroke="#444" strokeWidth="2" />
      <path d="M46 58h24l6 19H40z" fill="#f3f3f3" /><path d="M50 68l6-5 2 6zM60 64l6-4 2 6zM48 74l7-3 3 4z" fill="#8d9296" />
      <rect x="41" y="39" width="36" height="17" rx="6" fill="#161616" /><ellipse cx="59" cy="41" rx="15" ry="2" fill="#3c3c3c" />
    </Tile>
  )
}

function Minimized() {
  return (
    <svg viewBox="0 0 80 80" className="size-20 overflow-visible drop-shadow-sm">
      <rect x="-7" y="14" width="93" height="52" fill="#39454e" />
      <rect x="-7" y="14" width="93" height="2.500" fill="#e6e0df" /><rect x="-7" y="17" width="19" height="49" fill="#2c363e" />
      <rect x="14" y="23" width="52" height="36" fill="#f2f3f4" /><rect x="14" y="23" width="52" height="4" fill="#cf2a2a" />
      <rect x="16" y="42" width="48" height="9" fill="#dbe9fb" />
      <path d="M16 30h46M16 33h40M16 37h14M40 37h22" stroke="#8b9096" strokeWidth="1" />
      <rect x="66" y="28" width="5" height="5" fill="#1d252b" />
      <circle cx="69" cy="70" r="16" fill="#e8e2e1" /><circle cx="69" cy="70" r="14.500" fill="#cd2423" />
      <g fill="#fff"><circle cx="60" cy="70" r="2.700" /><circle cx="68" cy="70" r="2.700" /><circle cx="76" cy="70" r="2.700" /><rect x="80" y="64" width="1.200" height="12" /></g>
    </svg>
  )
}

function Trash() {
  return (
    <svg viewBox="0 0 80 80" className="size-20 overflow-visible drop-shadow-md">
      <defs>
        <linearGradient id="bin" x1="0" x2="1"><stop offset="0" stopColor="#c5c5c5" /><stop offset=".3" stopColor="#efefef" /><stop offset=".7" stopColor="#e2e2e2" /><stop offset="1" stopColor="#b9b9b9" /></linearGradient>
      </defs>
      <path d="M8 5L18-3l6 1 6-6 8 8 10-7 6 8 10 1 8 6-14 12H18z" fill="#dcdcda" />
      <path d="M14 3l8-4 4 7-8 6zM46-1l7-3 4 10-8 4zM61 2l7 4-4 6z" fill="#5d5750" /><path d="M32 5l7 2-3 5z" fill="#3fc4b4" /><path d="M50 9l6 2-5 4z" fill="#b5473a" /><path d="M34-3l5 7-8 1z" fill="#8f8f8a" />
      <path d="M5 5c10 9 60 9 70 0l-9 71c-2 11-50 11-52 0z" fill="url(#bin)" opacity=".95" />
      <path d="M5 5c10 9 60 9 70 0" fill="none" stroke="#fff" strokeWidth="1.600" />
    </svg>
  )
}

const dockGroups = [
  [
    { name: 'Finder', Icon: Finder, open: true }, { name: 'Launchpad', Icon: Launchpad },
    { name: 'Safari', Icon: Safari, open: true }, { name: 'Messages', Icon: Messages, open: true, badge: 213 },
    { name: 'Mail', Icon: Mail }, { name: 'Maps', Icon: Maps }, { name: 'Photos', Icon: Photos },
    { name: 'FaceTime', Icon: FaceTime }, { name: 'Calendar', Icon: Calendar, open: true },
    { name: 'Contacts', Icon: Contacts }, { name: 'Reminders', Icon: Reminders, badge: 1 },
    { name: 'Notes', Icon: Notes, open: true }, { name: 'Freeform', Icon: Freeform }, { name: 'TV', Icon: AppleTV },
    { name: 'Music', Icon: Music }, { name: 'News', Icon: News }, { name: 'App Store', Icon: AppStore },
    { name: 'System Settings', Icon: Settings },
  ],
  [
    { name: 'Slack', Icon: Slack, open: true, badge: 259 }, { name: 'Text expander', Icon: TextBlaze, open: true },
    { name: 'Chrome', Icon: Chrome, open: true }, { name: 'Preview', Icon: Preview, open: true },
  ],
  [{ name: 'Minimized window', Icon: Minimized }, { name: 'Trash', Icon: Trash }],
]

function Dock() {
  return (
    <footer className="relative z-10 flex h-[146px] shrink-0 justify-center bg-linear-to-b from-[#7a6862] to-[#f2c8c1] pb-[10px] pt-[6px]">
      <div className="flex h-[130px] gap-7 rounded-[32px] border-2 border-[#f3d3ce] bg-linear-to-b from-[#dfbcb7] to-[#f5cac5] px-[18px] pt-[18px] shadow-[0_0_50px_rgba(0,0,0,0.3)]">
        {dockGroups.map((group, g) => (
          <div key={g} className="flex gap-7">
            {g > 0 && <span className="mx-[9px] -mt-[2px] h-[94px] w-[2px] bg-[#b08e89]" />}
            {group.map(({ name, Icon, open, badge }) => (
              <button key={name} aria-label={name} className="relative flex w-20 flex-col items-center">
                <Icon />
                {open && <span className="mt-[18px] size-2 rounded-full bg-[#6f463f]" />}
                {badge && (
                  <span className={`absolute -top-[10px] flex h-[38px] min-w-[38px] items-center justify-center rounded-full bg-[#fb4033] px-[3px] text-[22px] text-white ${badge > 9 ? '-right-[14px]' : '-right-[12px]'}`}>{badge}</span>
                )}
              </button>
            ))}
          </div>
        ))}
      </div>
    </footer>
  )
}

export default function App() {
  return (
    <div className="flex h-screen flex-col overflow-hidden bg-[#f9fbfd] font-[Inter,sans-serif]">
      <MenuBar />
      <div className="h-1 shrink-0 border-b-2 border-[#b5aeab] bg-[#4a3f3b]" />
      <SafariToolbar />
      <TabStrip />
      <DocsHeader />
      <DocsToolbar />
      <Ruler />
      <main className="flex min-h-0 flex-1 overflow-hidden">
        <TabsPanel />
        <div className="pt-[22px]"><Page /></div>
      </main>
      <Dock />
    </div>
  )
}
